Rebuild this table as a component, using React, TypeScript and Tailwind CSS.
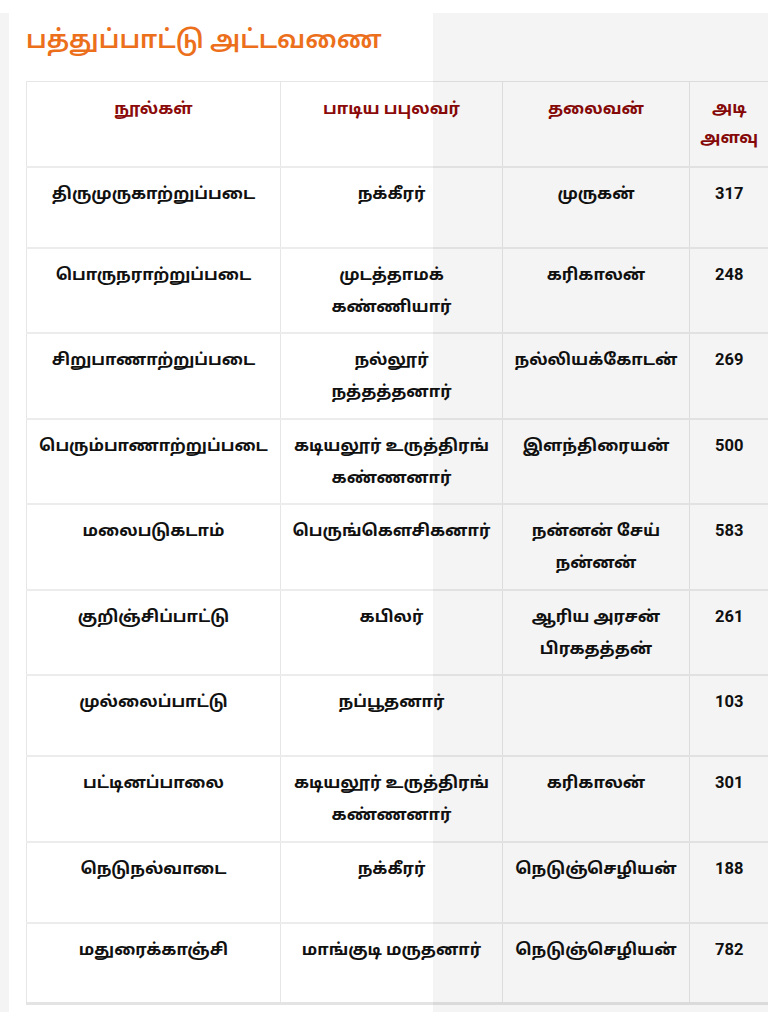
const rows: [string, string[], string[], string][] = [
  ["திருமுருகாற்றுப்படை", ["நக்கீரர்"], ["முருகன்"], "317"],
  ["பொருநராற்றுப்படை", ["முடத்தாமக்", "கண்ணியார்"], ["கரிகாலன்"], "248"],
  ["சிறுபாணாற்றுப்படை", ["நல்லூர்", "நத்தத்தனார்"], ["நல்லியக்கோடன்"], "269"],
  ["பெரும்பாணாற்றுப்படை", ["கடியலூர் உருத்திரங்", "கண்ணனார்"], ["இளந்திரையன்"], "500"],
  ["மலைபடுகடாம்", ["பெருங்கௌசிகனார்"], ["நன்னன் சேய்", "நன்னன்"], "583"],
  ["குறிஞ்சிப்பாட்டு", ["கபிலர்"], ["ஆரிய அரசன்", "பிரகதத்தன்"], "261"],
  ["முல்லைப்பாட்டு", ["நப்பூதனார்"], [], "103"],
  ["பட்டினப்பாலை", ["கடியலூர் உருத்திரங்", "கண்ணனார்"], ["கரிகாலன்"], "301"],
  ["நெடுநல்வாடை", ["நக்கீரர்"], ["நெடுஞ்செழியன்"], "188"],
  ["மதுரைக்காஞ்சி", ["மாங்குடி மருதனார்"], ["நெடுஞ்செழியன்"], "782"],
];

const font = "font-['Roboto','Noto_Sans_Tamil','Noto_Sans','DejaVu_Sans',sans-serif]";

function Lines({ items }: { items: string[] }) {
  return (
    <>
      {items.map((t, i) => (
        <div key={i}>{t}</div>
      ))}
    </>
  );
}

export default function App() {
  return (
    <div className={`relative h-[1024px] w-[768px] overflow-hidden bg-white ${font}`}>
      <div className="mt-[13px] flex h-[999px]">
        <div className="w-[9px] shrink-0 bg-[#f4f4f4]" />
        <div className="flex-1 overflow-hidden bg-white pl-[17px]">
          <h1 className="mt-[10px] text-[25.5px] font-semibold leading-[32px] text-[#ec6f1c]">
            பத்துப்பாட்டு அட்டவணை
          </h1>
          <table className="mt-[26px] w-[742px] table-fixed border-collapse border-l border-t border-[#e6e6e6] text-center text-[16.5px] font-bold leading-[32px]">
            <colgroup>
              <col className="w-[254px]" />
              <col className="w-[222px]" />
              <col className="w-[187px]" />
              <col className="w-[79px]" />
            </colgroup>
            <thead>
              <tr className="h-[85px] border-b-2 border-[#ececec] align-top text-[#8b0a0a]">
                <th className="border-r border-[#e6e6e6] pt-[11px] font-bold">நூல்கள்</th>
                <th className="border-r border-[#e6e6e6] pt-[11px] font-bold">பாடிய பபுலவர்</th>
                <th className="border-r border-[#e6e6e6] pt-[11px] font-bold">தலைவன்</th>
                <th className="pt-[11px] font-bold leading-[30px]">
                  <div>அடி</div>
                  <div>அளவு</div>
                </th>
              </tr>
            </thead>
            <tbody className="text-[#111]">
              {rows.map(([a, b, c, d], i) => (
                <tr
                  key={i}
                  className={`h-[81px] align-top ${i === rows.length - 1 ? "border-b-[3px] border-[#e4e4e4]" : "border-b-2 border-[#ececec]"}`}
                >
                  <td className="border-r border-[#e6e6e6] pt-[10px] pb-[9.5px]">{a}</td>
                  <td className="border-r border-[#e6e6e6] pt-[10px] pb-[9.5px]">
                    <Lines items={b} />
                  </td>
                  <td className="border-r border-[#e6e6e6] pt-[10px] pb-[9.5px]">
                    <Lines items={c} />
                  </td>
                  <td className="pt-[10px] pb-[9.5px]">{d}</td>
                </tr>
              ))}
            </tbody>
          </table>
        </div>
      </div>
      {/* grey tint over the right part of the capture */}
      <div className="pointer-events-none absolute left-[433px] top-[13px] h-[999px] w-[335px] bg-black/[0.045]" />
    </div>
  );
}
